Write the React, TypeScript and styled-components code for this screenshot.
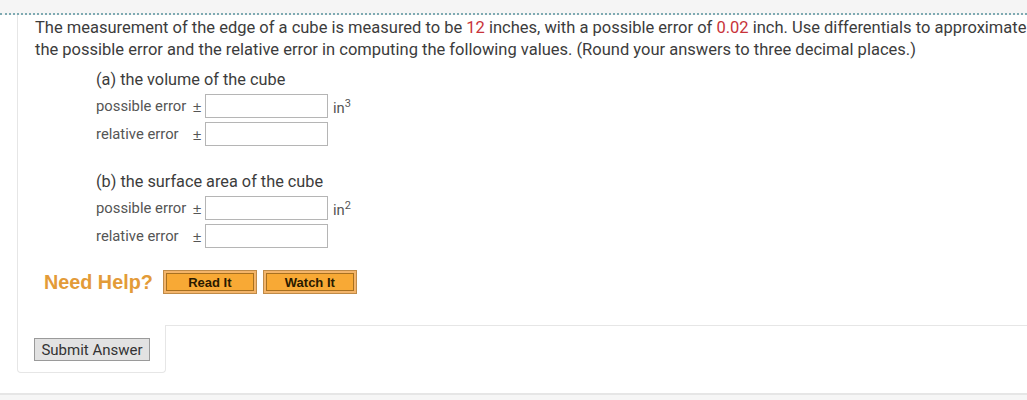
import React, { FC } from 'react';
import styled, { createGlobalStyle } from 'styled-components';

const GlobalStyle = createGlobalStyle`
  body {
    margin: 0;
    background: #ffffff;
    font-family: Roboto, "Liberation Sans", sans-serif;
  }
`

const Page = styled.div`
  width: 1027px;
  height: 400px;
  overflow: hidden;
  background: #ffffff;
  display: flex;
  flex-direction: column;
`

const TopBand = styled.div`
  height: 13px;
  background: #f5f5f5;
  border-bottom: 2px dotted #7eaab2;
`

const Card = styled.div`
  margin-left: 17px;
  border-left: 1px solid #e6e6e6;
  padding: 2px 0 0 17px;
  height: 310px;
  box-sizing: border-box;
`

const Question = styled.p`
  margin: 0;
  font-size: 16.5px;
  line-height: 22px;
  color: #3c3c3c;
  white-space: nowrap;
`

const Num = styled.span`
  color: #c8333a;
`

const Part = styled.div<{ gap: number }>`
  margin: ${({ gap }) => gap}px 0 0 61px;
`

const PartTitle = styled.div`
  font-size: 16.3px;
  line-height: 22px;
  color: #3c3c3c;
  margin-bottom: 3px;
`

const Row = styled.div`
  display: flex;
  align-items: center;
  height: 24px;
  margin-bottom: 4px;
`

const Label = styled.span`
  width: 97px;
  font-size: 14.8px;
  color: #555;
`

const Pm = styled.span`
  width: 12px;
  font-family: "Liberation Sans", Arial, sans-serif;
  font-size: 15px;
  color: #555;
`

const Field = styled.input`
  width: 123px;
  height: 24px;
  box-sizing: border-box;
  border: 1px solid #b5b5b5;
  padding: 0 4px;
  margin: 0;
  background: #fff;
`

const Unit = styled.span`
  margin-left: 5px;
  font-size: 14.8px;
  color: #555;
  align-self: flex-start;
  margin-top: 3px;

  sup {
    font-size: 11px;
    vertical-align: 6px;
  }
`

const HelpRow = styled.div`
  display: flex;
  align-items: center;
  margin: 22px 0 0 9px;
  gap: 6px;
`

const NeedHelp = styled.span`
  font-family: "Liberation Sans", Arial, sans-serif;
  font-weight: bold;
  font-size: 19.8px;
  color: #e39b38;
  margin-right: 4px;
`

const HelpButton = styled.button`
  width: 94px;
  height: 24px;
  padding: 0;
  font-family: "Liberation Sans", Arial, sans-serif;
  font-weight: bold;
  font-size: 13px;
  color: #2a1a00;
  background: #f8a935;
  border: 1px solid #c08b48;
  box-shadow: inset 0 0 0 2px #f3b46a, inset 0 0 0 3px #a8701f;
  cursor: pointer;
`

const Footer = styled.div`
  display: flex;
  height: 48px;
`

const SubmitTab = styled.div`
  width: 149px;
  margin-left: 17px;
  border: 1px solid #e6e6e6;
  border-top: none;
  border-radius: 0 0 4px 4px;
  box-sizing: border-box;
  padding: 13px 0 0 16px;
`

const Filler = styled.div`
  flex: 1;
  border-top: 1px solid #e6e6e6;
`

const SubmitButton = styled.button`
  width: 116px;
  height: 23px;
  padding: 0;
  font-family: Roboto, "Liberation Sans", sans-serif;
  font-size: 15px;
  color: #333;
  background: #e2e2e2;
  border: 1px solid #9a9a9a;
  cursor: pointer;
`

const BottomBand = styled.div`
  margin-top: 20px;
  flex: 1;
  background: #f6f6f6;
  border-top: 2px solid #e6e6e6;
`

interface IPart {
  title: string;
  unit: string;
  power: string;
  gap: number;
}

const AnswerPart: FC<IPart> = ({ title, unit, power, gap }) => (
  <Part gap={gap}>
    <PartTitle>{title}</PartTitle>
    <Row>
      <Label>possible error</Label>
      <Pm>±</Pm>
      <Field type="text" />
      <Unit>{unit}<sup>{power}</sup></Unit>
    </Row>
    <Row>
      <Label>relative error</Label>
      <Pm>±</Pm>
      <Field type="text" />
    </Row>
  </Part>
)

const App: FC = () => (
  <Page>
    <GlobalStyle />
    <TopBand />
    <Card>
      <Question>
        The measurement of the edge of a cube is measured to be <Num>12</Num> inches, with a possible error of <Num>0.02</Num> inch. Use differentials to approximate
      </Question>
      <Question>
        the possible error and the relative error in computing the following values. (Round your answers to three decimal places.)
      </Question>
      <AnswerPart title="(a) the volume of the cube" unit="in" power="3" gap={8} />
      <AnswerPart title="(b) the surface area of the cube" unit="in" power="2" gap={25} />
      <HelpRow>
        <NeedHelp>Need Help?</NeedHelp>
        <HelpButton>Read It</HelpButton>
        <HelpButton>Watch It</HelpButton>
      </HelpRow>
    </Card>
    <Footer>
      <SubmitTab>
        <SubmitButton>Submit Answer</SubmitButton>
      </SubmitTab>
      <Filler />
    </Footer>
    <BottomBand />
  </Page>
)

export default App;
